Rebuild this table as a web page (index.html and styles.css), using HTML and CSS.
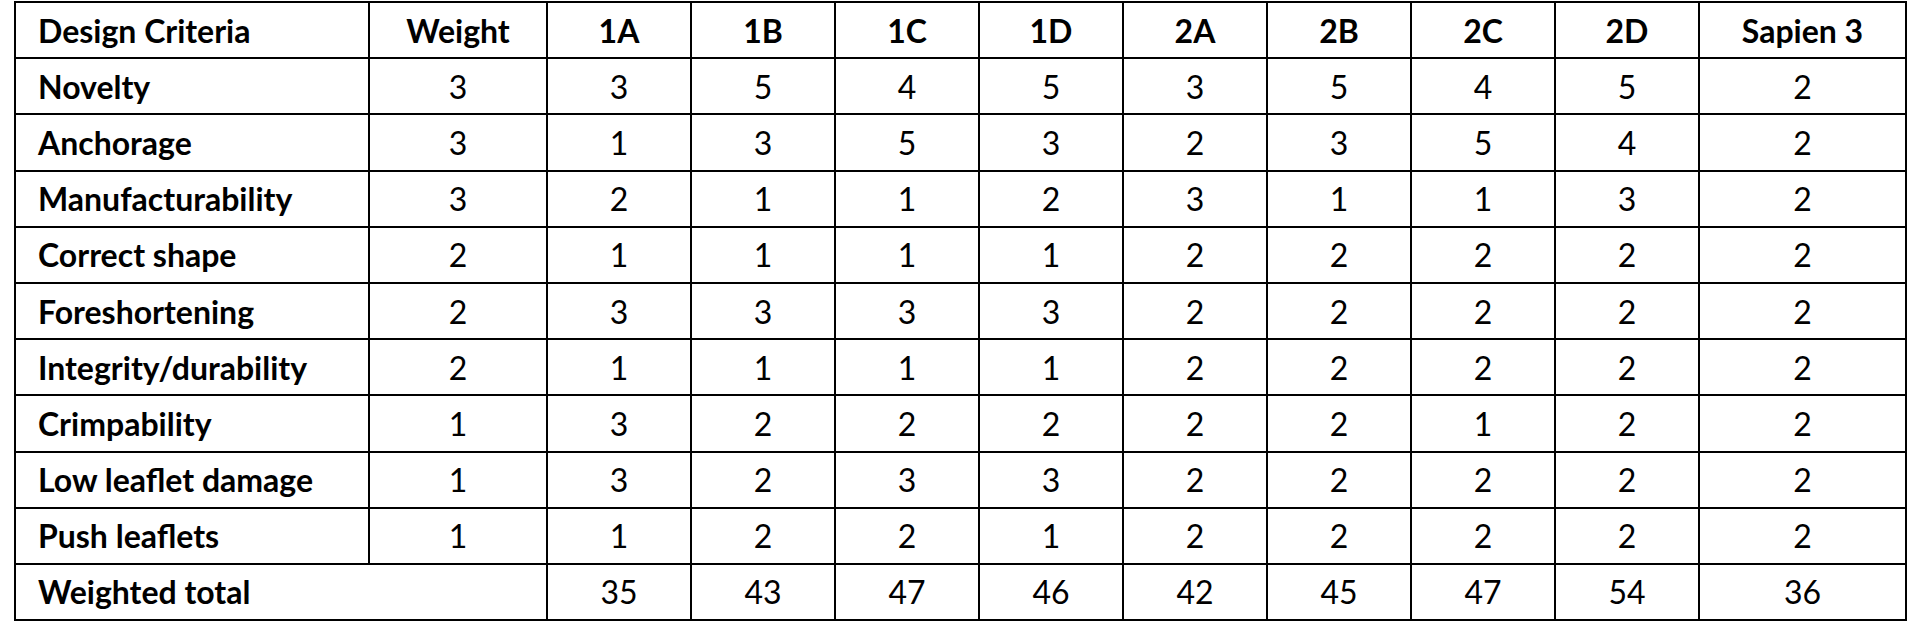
FILE: index.html
```html
<!DOCTYPE html>
<html>
<head>
<meta charset="utf-8">
<link rel="stylesheet" href="styles.css">
</head>
<body>
<table class="matrix">
  <colgroup>
    <col class="c-crit"><col class="c-weight">
    <col class="c-opt"><col class="c-opt"><col class="c-opt"><col class="c-opt">
    <col class="c-opt"><col class="c-opt"><col class="c-opt"><col class="c-opt">
    <col class="c-sapien">
  </colgroup>
  <tr class="head">
    <th class="crit">Design Criteria</th><th>Weight</th><th>1A</th><th>1B</th><th>1C</th><th>1D</th><th>2A</th><th>2B</th><th>2C</th><th>2D</th><th>Sapien 3</th>
  </tr>
  <tr><th class="crit">Novelty</th><td>3</td><td>3</td><td>5</td><td>4</td><td>5</td><td>3</td><td>5</td><td>4</td><td>5</td><td>2</td></tr>
  <tr><th class="crit">Anchorage</th><td>3</td><td>1</td><td>3</td><td>5</td><td>3</td><td>2</td><td>3</td><td>5</td><td>4</td><td>2</td></tr>
  <tr><th class="crit">Manufacturability</th><td>3</td><td>2</td><td>1</td><td>1</td><td>2</td><td>3</td><td>1</td><td>1</td><td>3</td><td>2</td></tr>
  <tr><th class="crit">Correct shape</th><td>2</td><td>1</td><td>1</td><td>1</td><td>1</td><td>2</td><td>2</td><td>2</td><td>2</td><td>2</td></tr>
  <tr><th class="crit">Foreshortening</th><td>2</td><td>3</td><td>3</td><td>3</td><td>3</td><td>2</td><td>2</td><td>2</td><td>2</td><td>2</td></tr>
  <tr><th class="crit">Integrity/durability</th><td>2</td><td>1</td><td>1</td><td>1</td><td>1</td><td>2</td><td>2</td><td>2</td><td>2</td><td>2</td></tr>
  <tr><th class="crit">Crimpability</th><td>1</td><td>3</td><td>2</td><td>2</td><td>2</td><td>2</td><td>2</td><td>1</td><td>2</td><td>2</td></tr>
  <tr><th class="crit">Low leaflet damage</th><td>1</td><td>3</td><td>2</td><td>3</td><td>3</td><td>2</td><td>2</td><td>2</td><td>2</td><td>2</td></tr>
  <tr><th class="crit">Push leaflets</th><td>1</td><td>1</td><td>2</td><td>2</td><td>1</td><td>2</td><td>2</td><td>2</td><td>2</td><td>2</td></tr>
  <tr><th class="crit" colspan="2">Weighted total</th><td>35</td><td>43</td><td>47</td><td>46</td><td>42</td><td>45</td><td>47</td><td>54</td><td>36</td></tr>
</table>
</body>
</html>
```

FILE: styles.css
```css
html, body {
  margin: 0;
  padding: 0;
  background: #ffffff;
}
body {
  padding: 1px 0 0 14px;
  font-family: Lato, "Liberation Sans", sans-serif;
  color: #000;
}
.matrix {
  border-collapse: collapse;
  table-layout: fixed;
  width: 1891px;
}
.c-crit { width: 354px; }
.c-weight { width: 178px; }
.c-opt { width: 144px; }
.c-sapien { width: 207px; }
.matrix th,
.matrix td {
  border: 2px solid #000;
  height: 54.2px;
  padding: 0;
  font-size: 32px;
  text-align: center;
  vertical-align: middle;
  white-space: nowrap;
}
.matrix th {
  font-weight: 700;
}
.matrix td {
  font-weight: 400;
}
.matrix .crit {
  text-align: left;
  padding-left: 22px;
}
```
